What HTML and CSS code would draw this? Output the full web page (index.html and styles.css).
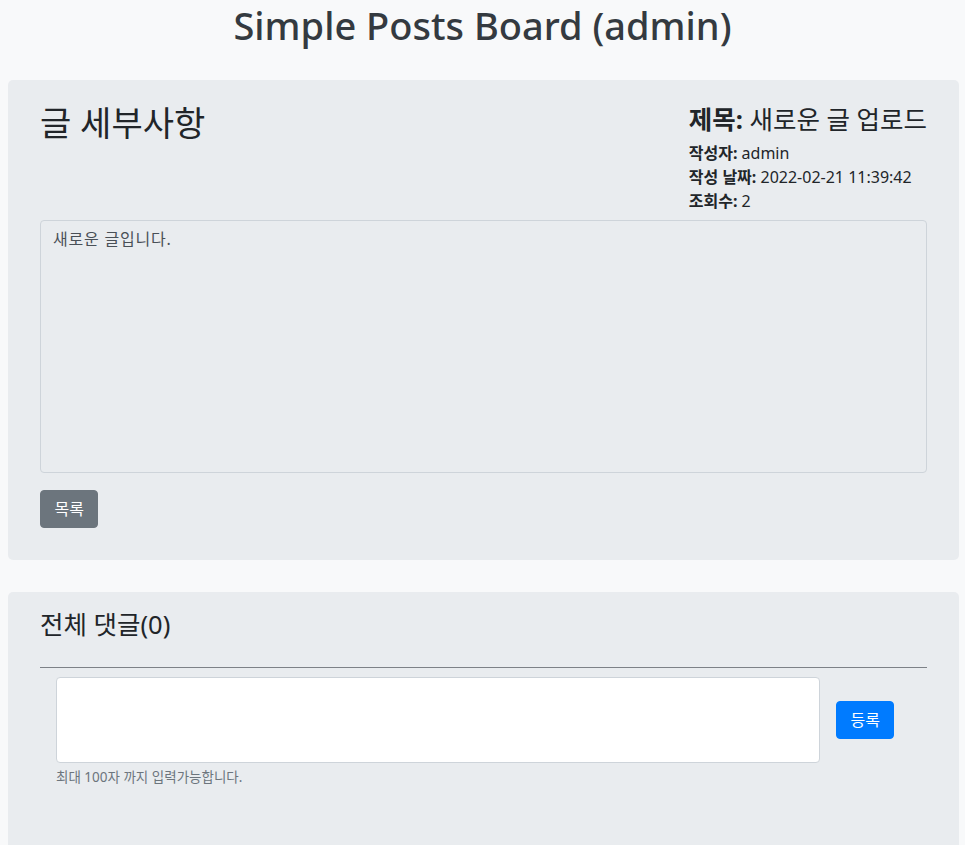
FILE: index.html
```html
<!DOCTYPE html>
<html lang="ko">
<head>
  <meta charset="UTF-8">
  <title>Simple Posts Board</title>
  <link rel="stylesheet" href="styles.css">
</head>
<body>

  <h1 class="board-title">Simple Posts Board (admin)</h1>

  <!-- 글 상세 -->
  <div class="panel">
    <div class="post-header">
      <h2>글 세부사항</h2>
      <div class="post-info">
        <h4><b>제목:</b> 새로운 글 업로드</h4>
        <div><b>작성자:</b> admin</div>
        <div><b>작성 날짜:</b> 2022-02-21 11:39:42</div>
        <div><b>조회수:</b> 2</div>
      </div>
    </div>
    <textarea class="post-body" readonly>새로운 글입니다.</textarea>
    <button class="btn btn-gray">목록</button>
  </div>

  <!-- 댓글 -->
  <div class="panel comments">
    <h4 class="comments-title">전체 댓글(0)</h4>
    <hr>
    <form class="comment-form" onsubmit="return false">
      <textarea class="comment-input" maxlength="100"></textarea>
      <div class="comment-side">
        <button class="btn btn-blue">등록</button>
      </div>
      <small class="form-hint">최대 100자 까지 입력가능합니다.</small>
    </form>
  </div>

</body>
</html>
```

FILE: styles.css
```css
body {
  font-family: "Noto Sans", "Noto Sans CJK KR", sans-serif;
  font-size: 16px;
  line-height: 1.5;
  color: #212529;
  background-color: #f8f9fa;
  margin: 0;
}

.board-title {
  margin: 0 0 32px;
  padding-top: 2px;
  font-size: 38px;
  font-weight: 500;
  line-height: 46px;
  text-align: center;
  color: #343a40;
}

.panel {
  background-color: #e9ecef;
  border-radius: 5px;
  margin: 0 6px 32px 8px;
  padding: 24px 32px 32px;
}

.post-header {
  display: flex;
  justify-content: space-between;
  align-items: flex-start;
}

.post-header h2 {
  margin: 0;
  font-size: 34px;
  font-weight: 400;
  line-height: 38px;
}

.post-info h4 {
  margin: 0 0 7px;
  font-size: 25.5px;
  font-weight: 400;
  line-height: 30px;
}

.post-info div {
  font-size: 16px;
  line-height: 24px;
}

.post-body {
  display: block;
  box-sizing: border-box;
  width: 100%;
  height: 253px;
  margin: 7px 0 17px;
  padding: 6px 12px;
  font-family: inherit;
  font-size: 16px;
  letter-spacing: 0.8px;
  line-height: 1.5;
  color: #495057;
  background-color: #e9ecef;
  border: 1px solid #ced4da;
  border-radius: 4px;
  resize: none;
  outline: none;
}

.btn {
  padding: 6px 13.5px;
  font-family: inherit;
  font-size: 16px;
  line-height: 24px;
  color: #fff;
  border: 1px solid transparent;
  border-radius: 4px;
  cursor: pointer;
}

.btn-gray {
  background-color: #6c757d;
  border-color: #6c757d;
}

.btn-blue {
  background-color: #007bff;
  border-color: #007bff;
}

.comments {
  padding-top: 17px;
  min-height: 240px;
}

.comments-title {
  margin: 0;
  font-size: 25.5px;
  font-weight: 400;
  line-height: 30px;
}

.comments hr {
  margin: 28px 0 9px;
  border: 0;
  border-top: 1px solid #7d8187;
}

.comment-form {
  display: grid;
  grid-template-columns: 1fr 75px;
  column-gap: 16px;
  padding: 0 16px;
}

.comment-input {
  box-sizing: border-box;
  height: 86px;
  padding: 6px 12px;
  font-family: inherit;
  font-size: 16px;
  background-color: #fff;
  border: 1px solid #ced4da;
  border-radius: 4px;
  resize: none;
  outline: none;
}

.comment-side {
  align-self: center;
}

.form-hint {
  margin-top: 4px;
  font-size: 13.5px;
  color: #6c757d;
}
```
